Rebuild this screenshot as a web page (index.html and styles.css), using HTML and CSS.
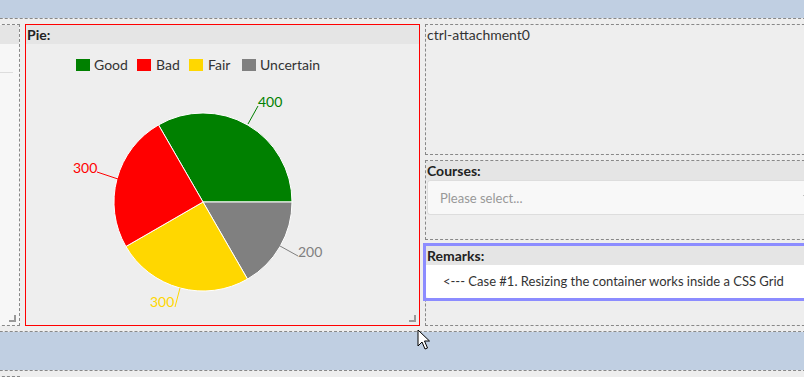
FILE: index.html
```html
<!DOCTYPE html>
<html>
<head>
  <meta charset="UTF-8">
  <title>Grid form</title>
  <link rel="stylesheet" href="styles.css">
</head>
<body>
  <div class="grid">
    <div class="cell cell-left">
      <div class="cell-title">&nbsp;</div>
      <div class="left-input"></div>
      <span class="grip"></span>
    </div>

    <div class="cell cell-pie">
      <div class="cell-title">Pie:</div>
      <svg class="chart" width="392" height="279" viewBox="0 0 392 279">
        <!-- legend -->
        <rect x="50" y="15" width="14" height="12" fill="#008000"/>
        <text x="68" y="26" class="legend">Good</text>
        <rect x="111" y="15" width="14" height="12" fill="#ff0000"/>
        <text x="130" y="26" class="legend">Bad</text>
        <rect x="163" y="15" width="14" height="12" fill="#ffd700"/>
        <text x="182" y="26" class="legend">Fair</text>
        <rect x="216" y="15" width="14" height="12" fill="#808080"/>
        <text x="234" y="26" class="legend">Uncertain</text>

        <!-- slices -->
        <g stroke="#ffffff" stroke-width="1">
          <path d="M177,158 L132.5,80.9 A89,89 0 0 1 266,158 Z" fill="#008000"/>
          <path d="M177,158 L266,158 A89,89 0 0 1 221.5,235.1 Z" fill="#808080"/>
          <path d="M177,158 L221.5,235.1 A89,89 0 0 1 99.9,202.5 Z" fill="#ffd700"/>
          <path d="M177,158 L99.9,202.5 A89,89 0 0 1 132.5,80.9 Z" fill="#ff0000"/>
        </g>

        <!-- labels -->
        <line x1="222" y1="80" x2="232" y2="62" stroke="#008000"/>
        <text x="232" y="63" class="label" fill="#008000">400</text>
        <line x1="92" y1="135" x2="71" y2="128" stroke="#ff0000"/>
        <text x="47" y="129" class="label" fill="#ff0000">300</text>
        <line x1="154" y1="244" x2="149" y2="263" stroke="#ffd700"/>
        <text x="124" y="263" class="label" fill="#ffd700">300</text>
        <line x1="254" y1="202" x2="272" y2="212" stroke="#808080"/>
        <text x="272" y="213" class="label" fill="#808080">200</text>
      </svg>
      <span class="grip"></span>
    </div>

    <div class="col-right">
      <div class="cell cell-attach">ctrl-attachment0</div>

      <div class="cell cell-courses">
        <div class="cell-title">Courses:</div>
        <div class="select">
          <span class="placeholder">Please select...</span>
          <span class="caret"></span>
        </div>
      </div>

      <div class="cell cell-remarks">
        <div class="field focused">
          <div class="cell-title">Remarks:</div>
          <div class="text-input">&lt;--- Case #1. Resizing the container works inside a CSS Grid</div>
        </div>
      </div>
    </div>
  </div>

  <div class="grid grid-next">
    <div class="cell"></div>
  </div>

  <svg class="cursor" width="14" height="22" viewBox="0 0 14 22">
    <path d="M1,1 L1,17 L5,13 L8,20 L10.5,19 L7.5,12 L12.5,12 Z" fill="#ffffff" stroke="#000000" stroke-width="1" stroke-linejoin="round"/>
  </svg>
</body>
</html>
```

FILE: styles.css
```css
body {
  margin: 0;
  padding-top: 18px;
  background-color: #c0cfe2;
  color: #333333;
  font-family: Lato, "Open Sans", sans-serif;
  font-size: 14px;
  overflow: hidden;
  height: 100vh;
  box-sizing: border-box;
  position: relative;
}

.grid {
  display: grid;
  grid-template-columns: 134px 395px 400px;
  grid-template-rows: 302px;
  gap: 5px;
  width: 939px;
  margin-left: -120px;
  padding: 5px;
  border: 1px dashed #888888;
  background-color: #eeeeee;
}

.grid-next {
  margin-top: 38px;
  grid-template-rows: 80px;
}

.cell {
  position: relative;
  border: 1px dashed #888888;
  background-color: #eeeeee;
  box-sizing: border-box;
}

.cell-title {
  height: 19px;
  line-height: 19px;
  padding-left: 1px;
  background-color: #e5e5e5;
  font-weight: bold;
  color: #222222;
}

.grip {
  position: absolute;
  right: 3px;
  bottom: 3px;
  width: 5px;
  height: 5px;
  border-right: 2px solid #999999;
  border-bottom: 2px solid #999999;
}

.cell-left {
  background-color: #f7f7f7;
}

.left-input {
  height: 28px;
  margin-right: 6px;
  border-bottom: 1px solid #dddddd;
}

.cell-pie {
  outline: 1px solid #ff0000;
  outline-offset: -1px;
}

.chart {
  display: block;
}

.legend {
  font-family: Lato, sans-serif;
  font-size: 14px;
  fill: #333333;
}

.label {
  font-family: Lato, sans-serif;
  font-size: 14px;
}

.col-right {
  display: flex;
  flex-direction: column;
  gap: 5px;
}

.cell-attach {
  height: 131px;
  padding-left: 1px;
  line-height: 19px;
}

.cell-courses {
  height: 80px;
}

.select {
  display: flex;
  align-items: center;
  justify-content: space-between;
  height: 35px;
  margin-left: 1px;
  padding: 0 0 0 12px;
  box-sizing: border-box;
  background-color: #f8f8f8;
  border: 1px solid #dddddd;
  border-right: none;
  border-radius: 3px 0 0 3px;
  font-size: 13px;
}

.placeholder {
  color: #999999;
}

.caret {
  width: 0;
  height: 0;
  margin-right: 13px;
  border-top: 5px solid #999999;
  border-left: 4px solid transparent;
  border-right: 4px solid transparent;
}

.cell-remarks {
  flex: 1;
}

.field.focused {
  outline: 3px solid #8c8cff;
}

.text-input {
  height: 33px;
  line-height: 33px;
  padding-left: 17px;
  background-color: #ffffff;
  border-radius: 0 0 0 3px;
  font-size: 13px;
  white-space: nowrap;
}

.cursor {
  position: absolute;
  left: 417px;
  top: 329px;
}
```
